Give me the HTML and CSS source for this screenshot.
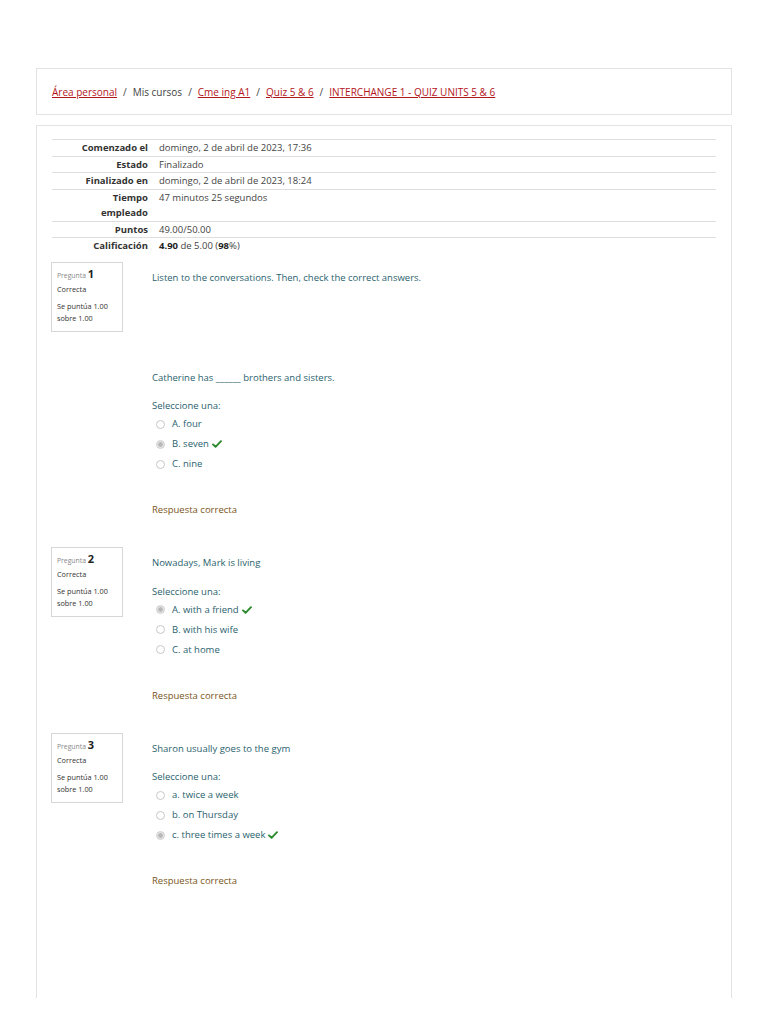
FILE: index.html
```html
<!DOCTYPE html>
<html lang="es">
<head>
<meta charset="utf-8">
<title>Quiz review</title>
<link rel="stylesheet" href="styles.css">
</head>
<body>
<div class="page">
  <nav class="crumbs">
    <a href="#">Área personal</a><span class="sep">/</span><span class="plain">Mis cursos</span><span class="sep">/</span><a href="#">Cme ing A1</a><span class="sep">/</span><a href="#">Quiz 5 &amp; 6</a><span class="sep">/</span><a href="#">INTERCHANGE 1 - QUIZ UNITS 5 &amp; 6</a>
  </nav>
  <main class="card">
    <div class="summary">
      <div class="row"><div class="lbl">Comenzado el</div><div class="val">domingo, 2 de abril de 2023, 17:36</div></div>
      <div class="row"><div class="lbl">Estado</div><div class="val">Finalizado</div></div>
      <div class="row"><div class="lbl">Finalizado en</div><div class="val">domingo, 2 de abril de 2023, 18:24</div></div>
      <div class="row"><div class="lbl">Tiempo empleado</div><div class="val">47 minutos 25 segundos</div></div>
      <div class="row"><div class="lbl">Puntos</div><div class="val">49.00/50.00</div></div>
      <div class="row last"><div class="lbl">Calificación</div><div class="val"><b>4.90</b> de 5.00 (<b>98</b>%)</div></div>
    </div>

    <section class="q">
      <div class="info">
        <div class="qno"><span class="small">Pregunta</span> <span class="num">1</span></div>
        <div class="state">Correcta</div>
        <div class="grade">Se puntúa 1.00 sobre 1.00</div>
      </div>
      <div class="content">
        <p class="qtext">Listen to the conversations. Then, check the correct answers.</p>
        <p class="qtext media">Catherine has ______ brothers and sisters.</p>
        <div class="prompt">Seleccione una:</div>
        <div class="opt"><span class="radio"></span>A. four</div>
        <div class="opt"><span class="radio on"></span>B. seven<svg class="tick" viewBox="0 0 12 10"><path d="M1 5.5 L4.2 8.5 L11 1.5" /></svg></div>
        <div class="opt"><span class="radio"></span>C. nine</div>
        <div class="feedback">Respuesta correcta</div>
      </div>
    </section>

    <section class="q">
      <div class="info">
        <div class="qno"><span class="small">Pregunta</span> <span class="num">2</span></div>
        <div class="state">Correcta</div>
        <div class="grade">Se puntúa 1.00 sobre 1.00</div>
      </div>
      <div class="content">
        <p class="qtext">Nowadays, Mark is living</p>
        <div class="prompt">Seleccione una:</div>
        <div class="opt"><span class="radio on"></span>A. with a friend<svg class="tick" viewBox="0 0 12 10"><path d="M1 5.5 L4.2 8.5 L11 1.5" /></svg></div>
        <div class="opt"><span class="radio"></span>B. with his wife</div>
        <div class="opt"><span class="radio"></span>C. at home</div>
        <div class="feedback">Respuesta correcta</div>
      </div>
    </section>

    <section class="q">
      <div class="info">
        <div class="qno"><span class="small">Pregunta</span> <span class="num">3</span></div>
        <div class="state">Correcta</div>
        <div class="grade">Se puntúa 1.00 sobre 1.00</div>
      </div>
      <div class="content">
        <p class="qtext">Sharon usually goes to the gym</p>
        <div class="prompt">Seleccione una:</div>
        <div class="opt"><span class="radio"></span>a. twice a week</div>
        <div class="opt"><span class="radio"></span>b. on Thursday</div>
        <div class="opt"><span class="radio on"></span>c. three times a week<svg class="tick" viewBox="0 0 12 10"><path d="M1 5.5 L4.2 8.5 L11 1.5" /></svg></div>
        <div class="feedback">Respuesta correcta</div>
      </div>
    </section>
  </main>
</div>
</body>
</html>
```

FILE: styles.css
```css
* { box-sizing: border-box; }
html, body { margin: 0; padding: 0; background: #fff; }
body {
  font-family: "Open Sans", "Noto Sans", "DejaVu Sans", sans-serif;
  font-size: 9.5px;
  color: #333;
}
.page {
  width: 696px;
  margin-left: 36px;
  padding-top: 68px;
}
.crumbs {
  height: 47px;
  border: 1px solid #e3e3e3;
  padding: 0 15px;
  display: flex;
  align-items: center;
  font-size: 10px;
  color: #444;
}
.crumbs a { color: #b3141a; text-decoration: underline; }
.crumbs .sep { padding: 0 6px; color: #444; }
.card {
  margin-top: 10px;
  height: 873px;
  border: 1px solid #e3e3e3;
  border-bottom: none;
  padding: 13px 15px 0 15px;
}
.summary { margin-bottom: 8px; }
.row {
  display: grid;
  grid-template-columns: 96px 1fr;
  column-gap: 11px;
  border-top: 1px solid #dedede;
  line-height: 15.5px;
}
.row .lbl { text-align: right; font-weight: 700; color: #333; padding-left: 22px; }
.row .val { color: #444; }
.row .val b { color: #222; }

.q {
  display: flex;
  align-items: flex-start;
  margin-left: -1px;
}
.info {
  width: 72px;
  flex: none;
  border: 1px solid #d6d6d6;
  padding: 3px 5px 7px 5px;
  font-size: 7.3px;
  color: #333;
  line-height: 11px;
}
.info .small { color: #888; font-size: 6.8px; }
.info .num { font-size: 11px; font-weight: 700; color: #222; }
.info .qno { line-height: 15px; }
.info .state { margin-top: 1px; }
.info .grade { margin-top: 5px; line-height: 12px; }
.content {
  margin-left: 29px;
  color: #2a5f6e;
  padding-top: 8px;
}
.qtext { margin: 0; line-height: 16px; }
.qtext.media { margin-top: 84px; }
.prompt { margin-top: 12.5px; line-height: 16px; }
.opt {
  display: flex;
  align-items: center;
  height: 20px;
  padding-left: 4px;
  line-height: 16px;
}
.radio {
  width: 9px;
  height: 9px;
  border-radius: 50%;
  border: 1px solid #c8c8c8;
  background: #fff;
  margin-right: 7px;
  flex: none;
}
.radio.on {
  background: radial-gradient(circle, #b8b8b8 0 2px, #e4e4e4 2.5px);
  border-color: #d0d0d0;
}
.tick {
  width: 10px;
  height: 8px;
  margin-left: 3px;
}
.tick path { fill: none; stroke: #2b8a2b; stroke-width: 2.4; stroke-linecap: round; stroke-linejoin: round; }
.feedback {
  margin-top: 28px;
  color: #7a5520;
  line-height: 16px;
  margin-bottom: 29px;
}
```
